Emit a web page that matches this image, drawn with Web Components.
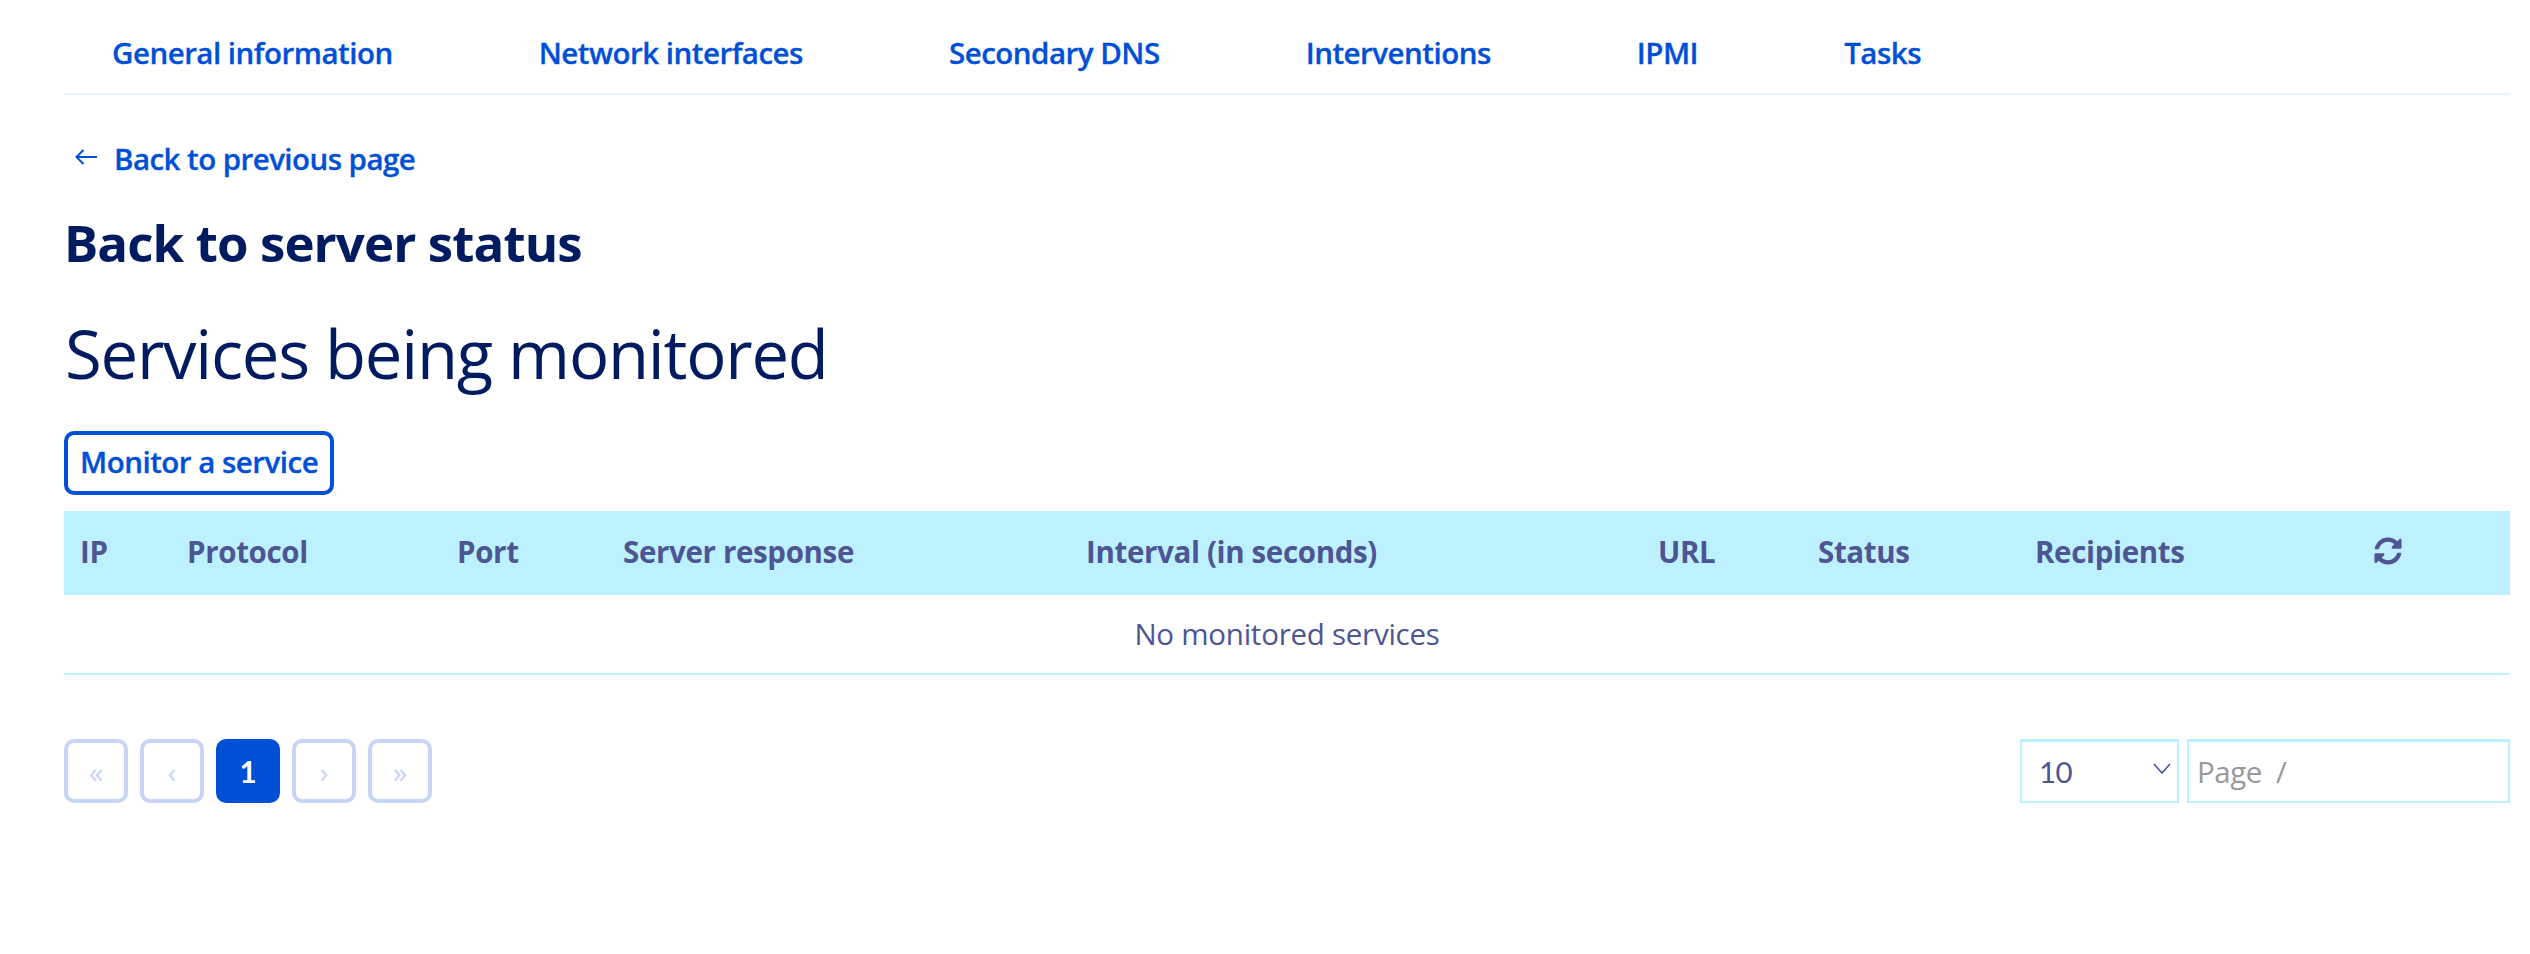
<!DOCTYPE html>
<html lang="en">
<head>
<meta charset="utf-8">
<title>Services being monitored</title>
<style>
  html, body { margin: 0; padding: 0; background: #fff; }
  body { font-family: "Open Sans", "Liberation Sans", sans-serif; color: #4d5693; }
</style>
</head>
<body>
<app-page>
  <tab-bar>
    <tab-link>General information</tab-link>
    <tab-link>Network interfaces</tab-link>
    <tab-link>Secondary DNS</tab-link>
    <tab-link>Interventions</tab-link>
    <tab-link>IPMI</tab-link>
    <tab-link>Tasks</tab-link>
  </tab-bar>
  <back-link>Back to previous page</back-link>
  <page-heading level="section">Back to server status</page-heading>
  <page-heading level="title">Services being monitored</page-heading>
  <outline-button>Monitor a service</outline-button>
  <service-table empty="No monitored services"></service-table>
  <table-pager></table-pager>
</app-page>

<script>
class AppPage extends HTMLElement {
  constructor() {
    super();
    this.attachShadow({ mode: 'open' }).innerHTML = `
      <style>
        :host { display: flex; flex-direction: column; align-items: stretch; padding: 0 20px 0 64px; }
      </style>
      <slot></slot>`;
  }
}

class TabBar extends HTMLElement {
  constructor() {
    super();
    this.attachShadow({ mode: 'open' }).innerHTML = `
      <style>
        :host { display: flex; gap: 146px; height: 93px; padding-left: 48px; border-bottom: 2px solid #e3f5ff; }
      </style>
      <slot></slot>`;
  }
}

class TabLink extends HTMLElement {
  constructor() {
    super();
    this.attachShadow({ mode: 'open' }).innerHTML = `
      <style>
        :host { display: block; padding-top: 33px; font-size: 29.5px; line-height: 40px; font-weight: 600; letter-spacing: -0.5px; -webkit-text-stroke: 0.3px currentColor; color: #0050d7; white-space: nowrap; }
      </style>
      <slot></slot>`;
  }
}

class BackLink extends HTMLElement {
  constructor() {
    super();
    this.attachShadow({ mode: 'open' }).innerHTML = `
      <style>
        :host { display: flex; align-items: center; gap: 17px; height: 40px; margin-top: 43px; padding-left: 11px; font-size: 29.5px; font-weight: 600; letter-spacing: -0.55px; -webkit-text-stroke: 0.3px currentColor; color: #0050d7; white-space: nowrap; }
        svg { width: 22px; height: 20px; flex: none; margin-top: -2px; }
      </style>
      <svg viewBox="0 0 22 20" fill="none" stroke="currentColor" stroke-width="2"><path d="M22 10H1.5M8.5 3 1.5 10l7 7"/></svg>
      <slot></slot>`;
  }
}

class PageHeading extends HTMLElement {
  constructor() {
    super();
    this.attachShadow({ mode: 'open' }).innerHTML = `
      <style>
        :host { display: block; color: #001b5f; white-space: nowrap; }
        :host([level="section"]) { margin-top: 32px; font-size: 51px; line-height: 64px; font-weight: 700; letter-spacing: -0.9px; }
        :host([level="title"]) { margin-top: 35px; padding-left: 1px; font-size: 67px; line-height: 88px; font-weight: 400; letter-spacing: -1.23px; }
      </style>
      <slot></slot>`;
  }
}

class OutlineButton extends HTMLElement {
  constructor() {
    super();
    this.attachShadow({ mode: 'open' }).innerHTML = `
      <style>
        :host { display: flex; align-items: center; box-sizing: border-box; align-self: flex-start; height: 64px; margin-top: 34px; padding: 0 12px 3px; border: 4px solid #0050d7; border-radius: 10px; font-size: 29.5px; font-weight: 600; letter-spacing: -0.5px; -webkit-text-stroke: 0.3px currentColor; color: #0050d7; white-space: nowrap; }
      </style>
      <slot></slot>`;
  }
}

class ServiceTable extends HTMLElement {
  constructor() {
    super();
    const columns = [
      ['IP', 107], ['Protocol', 270], ['Port', 166], ['Server response', 463],
      ['Interval (in seconds)', 572], ['URL', 160], ['Status', 217], ['Recipients', 339]
    ];
    const head = columns.map(([label]) => `<th>${label}</th>`).join('');
    const cols = columns.map(([, width]) => `<col style="width:${width}px">`).join('');
    this.attachShadow({ mode: 'open' }).innerHTML = `
      <style>
        :host { display: block; margin-top: 16px; }
        table { width: 100%; table-layout: fixed; border-collapse: collapse; }
        th { height: 84px; box-sizing: border-box; padding: 0 0 4px 16px; background: #bef1ff; font-size: 29.5px; font-weight: 700; letter-spacing: -0.35px; text-align: left; white-space: nowrap; color: #4d5693; }
        td { height: 79px; box-sizing: border-box; padding: 0 0 2px; border-bottom: 2px solid #bef1ff; font-size: 29.5px; letter-spacing: -0.25px; text-align: center; color: #4d5693; }
        svg { display: block; width: 28px; height: 28px; fill: currentColor; }
      </style>
      <table>
        <colgroup>${cols}<col style="width:152px"></colgroup>
        <thead><tr>${head}<th aria-label="Refresh">
          <svg viewBox="0 0 512 512"><path d="M370.72 133.28C339.458 104.008 298.888 87.962 255.848 88c-77.458.068-144.328 53.178-162.791 126.85-1.344 5.363-6.122 9.15-11.651 9.15H24.103c-7.498 0-13.194-6.807-11.807-14.176C33.933 94.924 134.813 8 256 8c66.448 0 126.791 26.136 171.315 68.685L463.03 40.97C478.149 25.851 504 36.559 504 57.941V192c0 13.255-10.745 24-24 24H345.941c-21.382 0-32.09-25.851-16.971-40.971l41.75-41.749zM32 296h134.059c21.382 0 32.09 25.851 16.971 40.971l-41.75 41.75c31.262 29.273 71.835 45.319 114.876 45.28 77.418-.07 144.315-53.144 162.787-126.849 1.344-5.363 6.122-9.15 11.651-9.15h57.304c7.498 0 13.194 6.807 11.807 14.176C478.067 417.076 377.187 504 256 504c-66.448 0-126.791-26.136-171.315-68.685L48.97 471.03C33.851 486.149 8 475.441 8 454.059V320c0-13.255 10.745-24 24-24z"/></svg>
        </th></tr></thead>
        <tbody><tr><td colspan="9">${this.getAttribute('empty') || ''}</td></tr></tbody>
      </table>`;
  }
}

class TablePager extends HTMLElement {
  constructor() {
    super();
    const pages = ['«', '‹', '1', '›', '»'];
    const buttons = pages.map((p) => `<span class="page ${p === '1' ? 'current' : ''}">${p}</span>`).join('');
    this.attachShadow({ mode: 'open' }).innerHTML = `
      <style>
        :host { display: flex; justify-content: space-between; margin-top: 64px; font-size: 29.5px; letter-spacing: -0.5px; }
        .pages, .tools { display: flex; }
        .pages { gap: 12px; }
        .tools { gap: 8px; }
        .page { display: flex; align-items: center; justify-content: center; box-sizing: border-box; width: 64px; height: 64px; border: 4px solid #c8d4f5; border-radius: 10px; color: #c8d4f5; letter-spacing: 0; }
        .current { background: #0050d7; border-color: #0050d7; color: #fff; font-family: Lato, "Open Sans", sans-serif; font-weight: 700; }
        .field { position: relative; display: flex; align-items: center; box-sizing: border-box; height: 64px; border: 2px solid #bef1ff; border-top-width: 3px; }
        .select { width: 159px; padding-left: 17px; font-family: Lato, "Open Sans", sans-serif; color: #4d5693; }
        .input { width: 323px; padding-left: 8px; color: #999; white-space: pre; }
        .select svg { position: absolute; right: 6px; top: 21px; width: 18px; height: 11px; }
      </style>
      <div class="pages">${buttons}</div>
      <div class="tools">
        <div class="field select">10<svg viewBox="0 0 18 11" fill="none" stroke="#4d5693" stroke-width="1.6"><path d="M1 1l8 9 8-9"/></svg></div>
        <div class="field input">Page  /</div>
      </div>`;
  }
}

customElements.define('app-page', AppPage);
customElements.define('tab-bar', TabBar);
customElements.define('tab-link', TabLink);
customElements.define('back-link', BackLink);
customElements.define('page-heading', PageHeading);
customElements.define('outline-button', OutlineButton);
customElements.define('service-table', ServiceTable);
customElements.define('table-pager', TablePager);
</script>
</body>
</html>
